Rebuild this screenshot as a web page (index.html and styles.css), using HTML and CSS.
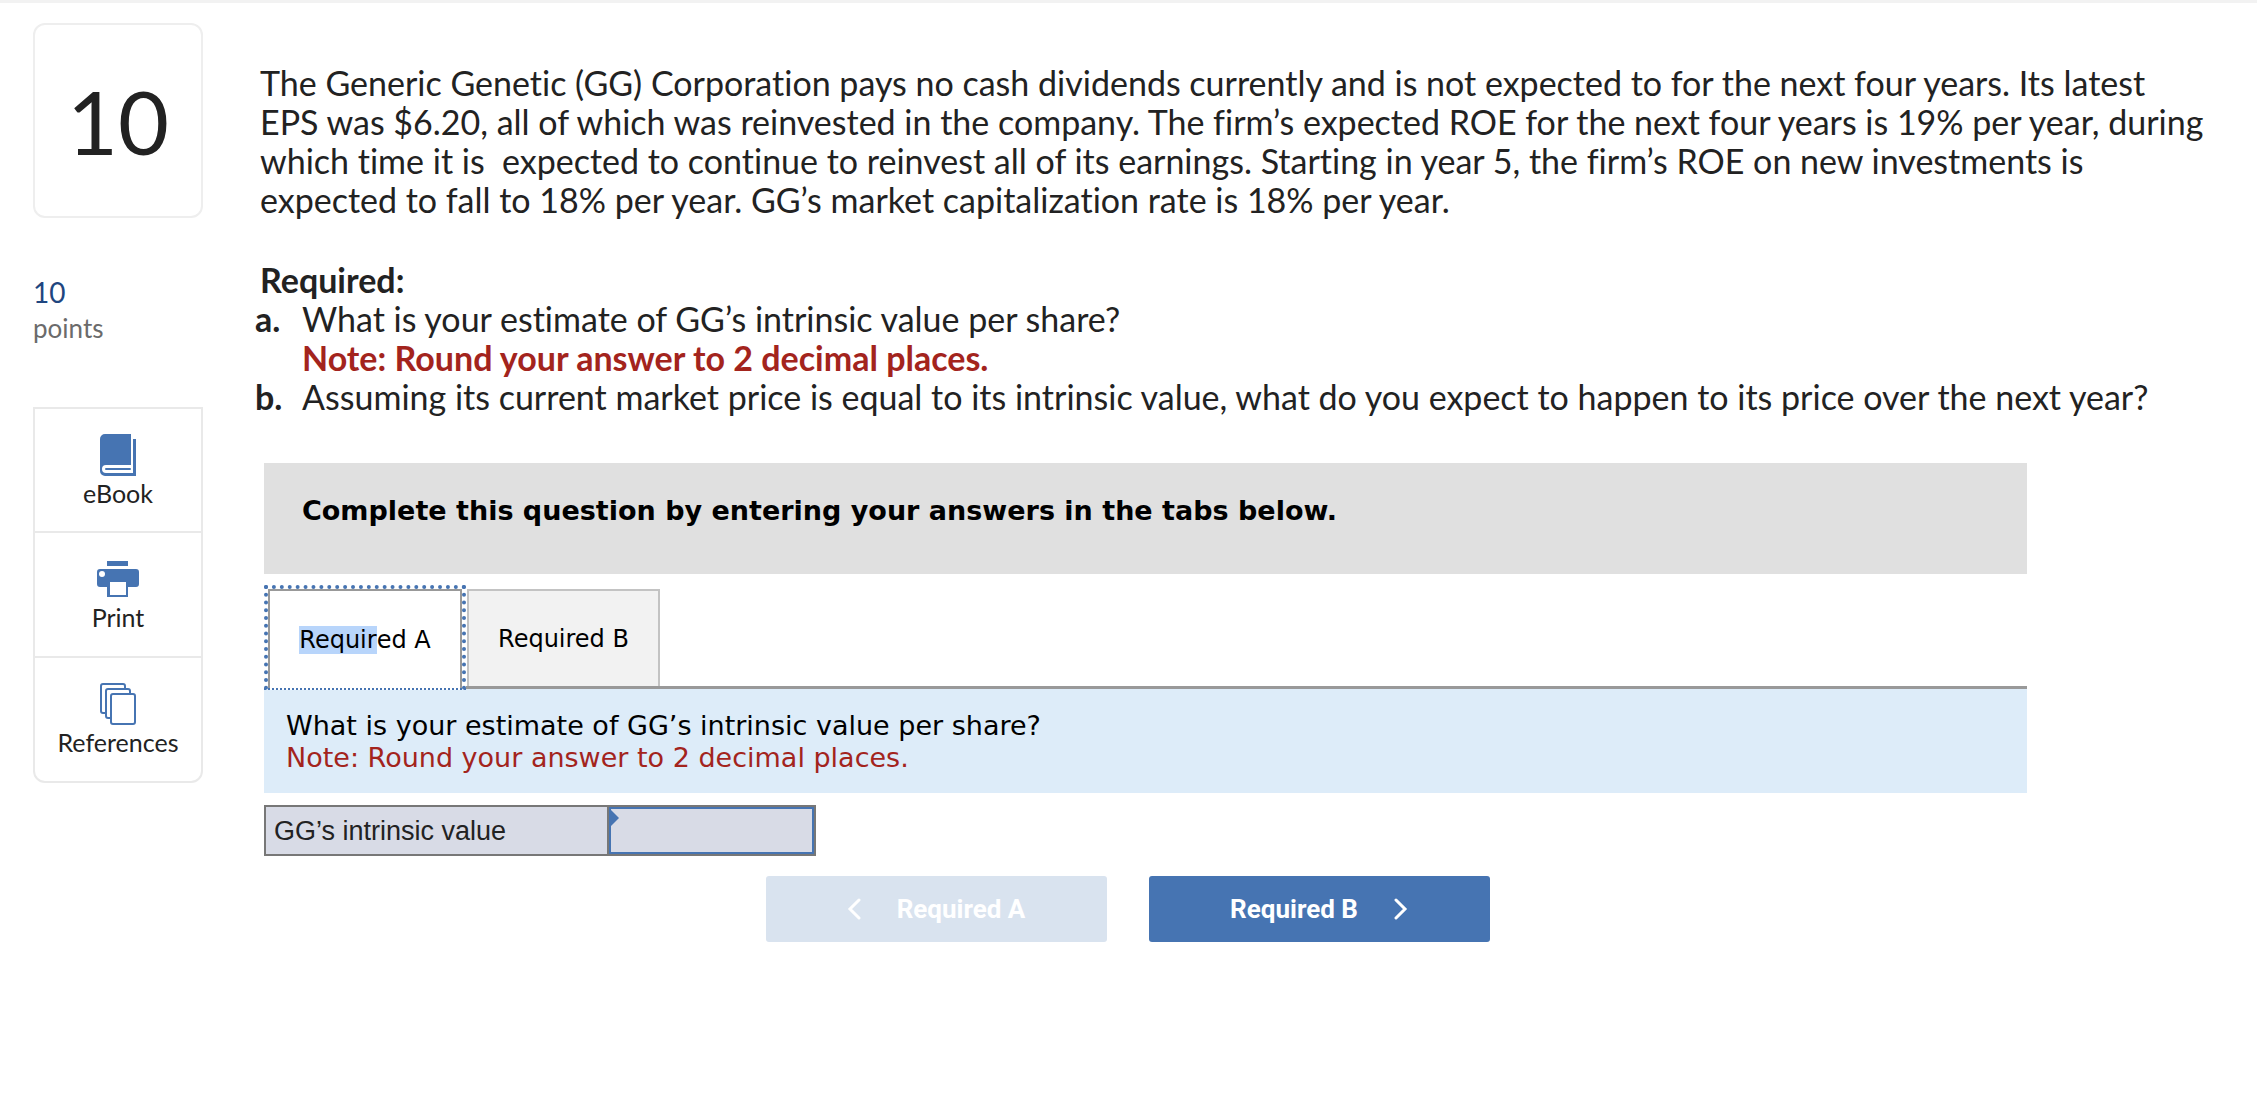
FILE: index.html
```html
<!DOCTYPE html>
<html lang="en">
<head>
  <meta charset="UTF-8" />
  <meta name="viewport" content="width=device-width, initial-scale=1" />
  <title>Question 10</title>
  <link rel="stylesheet" href="styles.css">
</head>
<body>
  <div class="page">
    <aside class="sidebar">
      <div class="number">10</div>
      <div class="points">
        <div class="points-value">10</div>
        <div class="points-label">points</div>
      </div>
      <nav class="tools">
        <a class="tool" href="#ebook">
          <svg width="36" height="42" viewBox="0 0 36 42"><path d="M5 0h26v31H6a4 4 0 0 0 0 8h27V5h3v37H5a5 5 0 0 1-5-5V5a5 5 0 0 1 5-5z" fill="#4674b2"/><rect x="5" y="34" width="26" height="2" rx="1" fill="#4674b2"/></svg>
          <span>eBook</span>
        </a>
        <a class="tool" href="#print">
          <svg width="42" height="42" viewBox="0 0 42 42"><path d="M10 3h21v5H10z" fill="#4674b2"/><path d="M3 11h36a3 3 0 0 1 3 3v12a3 3 0 0 1-3 3h-8v10H10V29H3a3 3 0 0 1-3-3V14a3 3 0 0 1 3-3zm10 13v13h16V24z" fill="#4674b2" fill-rule="evenodd"/><circle cx="5" cy="16" r="3" fill="#fff"/></svg>
          <span>Print</span>
        </a>
        <a class="tool" href="#references">
          <svg width="36" height="42" viewBox="0 0 36 42" fill="#fff" stroke="#4674b2" stroke-width="2"><rect x="1" y="1" width="24" height="29" rx="2"/><rect x="6" y="6" width="24" height="29" rx="2"/><rect x="11" y="11" width="24" height="30" rx="2"/></svg>
          <span>References</span>
        </a>
      </nav>
    </aside>

    <main class="content">
      <p class="intro">The Generic Genetic (GG) Corporation pays no cash dividends currently and is not expected to for the next four years. Its latest<br>
      EPS was $6.20, all of which was reinvested in the company. The firm’s expected ROE for the next four years is 19% per year, during<br>
      which time it is&nbsp; expected to continue to reinvest all of its earnings. Starting in year 5, the firm’s ROE on new investments is<br>
      expected to fall to 18% per year. GG’s market capitalization rate is 18% per year.</p>

      <div class="required-title">Required:</div>
      <div class="item">
        <b>a.</b>
        <div>What is your estimate of GG’s intrinsic value per share?<br><strong class="note">Note: Round your answer to 2 decimal places.</strong></div>
      </div>
      <div class="item">
        <b>b.</b>
        <div>Assuming its current market price is equal to its intrinsic value, what do you expect to happen to its price over the next year?</div>
      </div>

      <section class="answer">
        <div class="banner">Complete this question by entering your answers in the tabs below.</div>
        <div class="tabs">
          <button class="tab active"><span><mark>Requir</mark>ed A</span></button>
          <button class="tab">Required B</button>
        </div>
        <div class="panel">
          What is your estimate of GG’s intrinsic value per share?<br>
          <span class="note">Note: Round your answer to 2 decimal places.</span>
        </div>
        <table class="sheet">
          <tr>
            <th><label for="value">GG’s intrinsic value</label></th>
            <td><input type="text" id="value" /></td>
          </tr>
        </table>
        <div class="pager">
          <button class="btn" disabled>
            <svg width="14" height="22" viewBox="0 0 14 22"><path d="M12 2L3 11l9 9"/></svg>
            Required A
          </button>
          <button class="btn">
            Required B
            <svg width="14" height="22" viewBox="0 0 14 22"><path d="M2 2l9 9-9 9"/></svg>
          </button>
        </div>
      </section>
    </main>
  </div>
</body>
</html>
```
FILE: styles.css
```css
* {
  box-sizing: border-box;
}
body {
  margin: 0;
  background: #fff;
  color: #222;
  font-family: Lato, sans-serif;
  font-variant-ligatures: none;
  border-top: 3px solid #f2f2f2;
}
.page {
  display: flex;
  align-items: flex-start;
  padding: 20px 0 0 33px;
}
.sidebar {
  width: 170px;
  flex: none;
}
.number {
  height: 195px;
  border: 2px solid #eee;
  border-radius: 12px;
  display: flex;
  align-items: center;
  justify-content: center;
  font-size: 88px;
}
.points {
  margin-top: 55px;
}
.points-value {
  font-size: 28px;
  line-height: 38px;
  color: #1f4680;
}
.points-label {
  font-size: 26px;
  line-height: 34px;
  color: #6b6b6b;
}
.tools {
  margin-top: 62px;
  border: 2px solid #e9e9e9;
  border-radius: 0 0 12px 12px;
}
.tool {
  height: 125px;
  padding-top: 25px;
  display: flex;
  flex-direction: column;
  align-items: center;
  gap: 1px;
  font-size: 25px;
  line-height: 32px;
  color: #222;
  text-decoration: none;
}
.tool + .tool {
  border-top: 2px solid #e9e9e9;
}
.tool:first-child {
  height: 122px;
}
.content {
  flex: 1;
  padding: 40px 0 0 57px;
  font-size: 34px;
  line-height: 39px;
}
.intro {
  margin: 0 0 41px;
  white-space: nowrap;
}
.required-title {
  font-weight: 700;
}
.item {
  display: flex;
  margin-left: -5px;
  white-space: nowrap;
}
.item > b {
  width: 47px;
}
.note {
  color: #a3241d;
}
.answer {
  margin: 47px 230px 0 4px;
  font-family: Verdana, "DejaVu Sans", sans-serif;
  color: #000;
}
.banner {
  height: 111px;
  padding: 28px 38px;
  background: #e0e0e0;
  font-size: 27px;
  font-weight: 700;
}
.tabs {
  display: flex;
  align-items: flex-end;
  gap: 1px;
  margin-top: 11px;
  border-bottom: 3px solid #999;
}
.tab {
  width: 193px;
  height: 97px;
  padding: 0;
  background: #f2f2f2;
  border: 2px solid #c3c3c3;
  border-bottom: none;
  font: 24px Verdana, "DejaVu Sans", sans-serif;
  color: #000;
}
.tab.active {
  width: 202px;
  height: 105px;
  margin-bottom: -4px;
  background: #fff;
  border: 4px dotted #4674b2;
  border-bottom-width: 2px;
}
.tab.active span {
  display: flex;
  align-items: center;
  justify-content: center;
  height: 100%;
  border: 2px solid #999;
  border-bottom: none;
}
mark {
  background: #b8d5fb;
  color: #000;
}
.panel {
  height: 104px;
  padding: 21px 22px;
  background: #ddecf9;
  font-size: 27px;
  line-height: 32px;
}
.sheet {
  margin-top: 12px;
  border-collapse: collapse;
  background: #d8dbe6;
  font: 27px/32px Arial, "Liberation Sans", sans-serif;
  color: #222;
}
.sheet th,
.sheet td {
  border: 2px solid #777;
  padding: 0;
}
.sheet th {
  width: 343px;
  padding-left: 8px;
  font-weight: 400;
  text-align: left;
}
.sheet td {
  position: relative;
}
.sheet td::before {
  content: "";
  position: absolute;
  top: 3px;
  left: 2px;
  border: 8px solid transparent;
  border-left-color: #4674b2;
  border-right: none;
}
.sheet input {
  display: block;
  width: 205px;
  height: 47px;
  padding: 0 12px;
  background: #d8dbe6;
  border: 2px solid #4674b2;
  font: inherit;
  outline: none;
}
.pager {
  display: flex;
  justify-content: center;
  gap: 42px;
  margin-top: 20px;
  padding-right: 36px;
}
.btn {
  width: 341px;
  height: 66px;
  display: flex;
  align-items: center;
  justify-content: center;
  gap: 36px;
  background: #4674b2;
  border: none;
  border-radius: 3px;
  font: 700 26px Roboto, sans-serif;
  color: #fff;
}
.btn:disabled {
  background: #d9e3ef;
}
.btn svg {
  fill: none;
  stroke: #fff;
  stroke-width: 3;
  stroke-linecap: round;
}
```
